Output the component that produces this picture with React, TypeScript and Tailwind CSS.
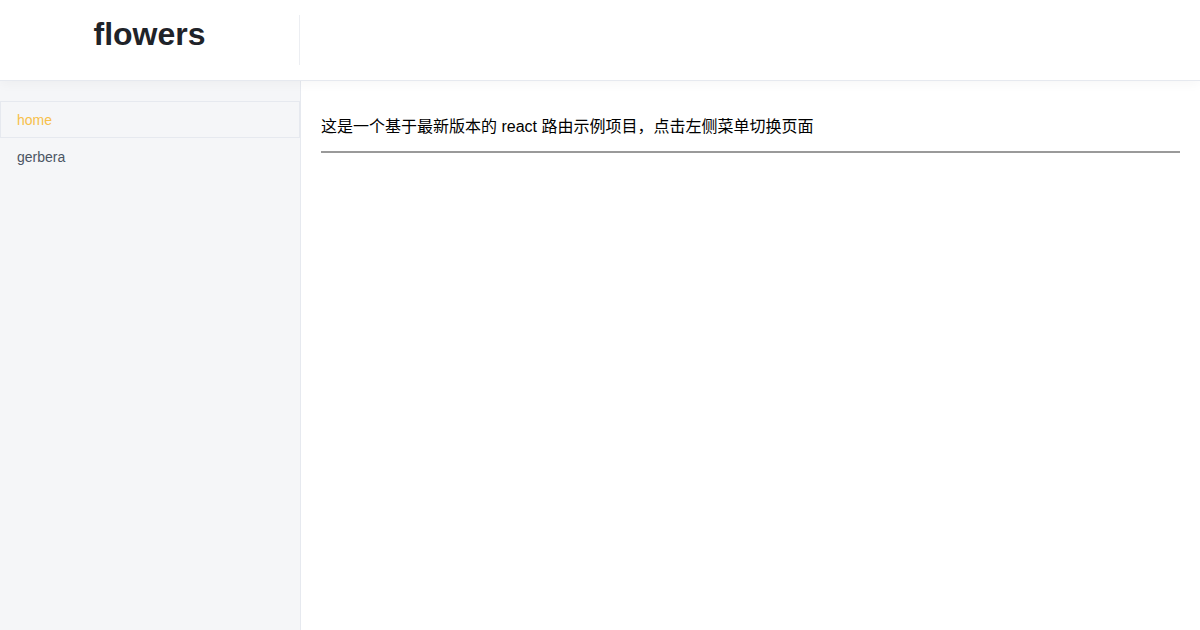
import React from "react";

const menu = [
  { key: "home", label: "home", active: true },
  { key: "gerbera", label: "gerbera", active: false },
];

export default function App() {
  return (
    <div
      className="h-screen flex flex-col bg-white text-gray-900"
      style={{ fontFamily: '"Liberation Sans", Arial, "Noto Sans CJK SC", sans-serif' }}
    >
      <header className="h-[81px] shrink-0 flex items-center border-b border-[#e6e9ef] bg-white shadow-[0_4px_10px_rgba(0,0,0,0.03)] relative z-10">
        <div className="w-[300px] h-[50px] flex items-center justify-center border-r border-[#eceef2]">
          <h1 className="text-[32px] font-bold text-[#1f2329] leading-none -mt-[12px]">flowers</h1>
        </div>
      </header>

      <div className="flex flex-1 min-h-0">
        {/* sidebar */}
        <aside className="w-[301px] shrink-0 bg-[#f5f6f8] border-r border-[#e6e9ef] pt-5">
          <ul>
            {menu.map((item) =>
              item.active ? (
                <li
                  key={item.key}
                  className="h-[37px] flex items-center pl-4 border border-[#e6e9ef] text-sm text-[#f7c04a]"
                >
                  {item.label}
                </li>
              ) : (
                <li
                  key={item.key}
                  className="h-[37px] flex items-center pl-[17px] text-sm text-[#4b5563]"
                >
                  {item.label}
                </li>
              )
            )}
          </ul>
        </aside>

        {/* content */}
        <main className="flex-1 px-5 pt-[38px]">
          <h2 className="text-base text-black leading-none">
            这是一个基于最新版本的 react 路由示例项目，点击左侧菜单切换页面
          </h2>
          <hr className="mt-[16px] border-t-2 border-[#9a9a9a]" />
        </main>
      </div>
    </div>
  );
}
